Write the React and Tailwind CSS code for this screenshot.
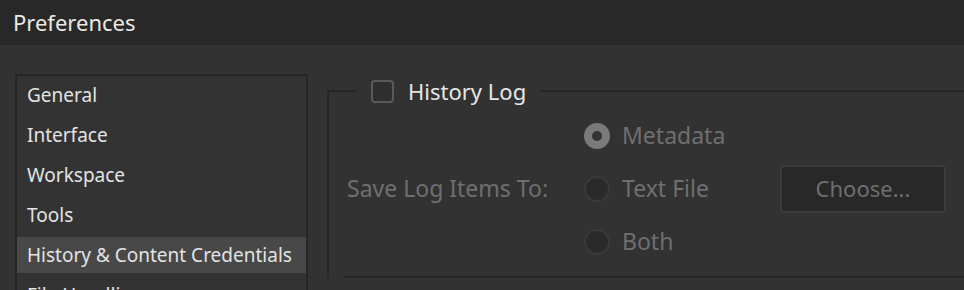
const items = [
  "General",
  "Interface",
  "Workspace",
  "Tools",
  "History & Content Credentials",
  "File Handling",
];

const radios = [
  { label: "Metadata", on: true },
  { label: "Text File", on: false },
  { label: "Both", on: false },
];

function Radio({ on }) {
  if (on) {
    return (
      <span className="flex h-[26px] w-[26px] shrink-0 items-center justify-center rounded-full bg-[#7a7a7a]">
        <span className="h-[10px] w-[10px] rounded-full bg-[#333333]" />
      </span>
    );
  }
  return (
    <span className="h-[26px] w-[26px] shrink-0 rounded-full border-2 border-[#3a3a3a] bg-[#2a2a2a]" />
  );
}

export default function App() {
  return (
    <div
      className="h-[290px] w-[964px] overflow-hidden bg-[#323232] text-[#e3e3e3]"
      style={{ fontFamily: '"Noto Sans", "Open Sans", sans-serif' }}
    >
      {/* TITLE BAR */}
      <div className="flex h-[45px] items-center bg-[#282828] pl-[13px] text-[22px] text-[#ece9e2]">
        Preferences
      </div>

      {/* BODY */}
      <div className="flex items-start pl-[15px] pt-[29px]">
        {/* CATEGORY LIST */}
        <div className="h-[240px] w-[293px] shrink-0 border-2 border-b-0 border-[#262626] bg-[#333333]">
          <ul className="flex flex-col gap-[4px] pt-[1px]">
            {items.map((it) => (
              <li
                key={it}
                className={`flex h-[36px] items-center pl-[10px] text-[19px] ${
                  it.startsWith("History") ? "bg-[#484848]" : ""
                }`}
              >
                {it}
              </li>
            ))}
          </ul>
        </div>

        {/* HISTORY LOG GROUP */}
        <fieldset className="m-0 ml-[19px] mt-[2px] w-[700px] shrink-0 border-0 border-l-2 border-t-2 border-[#262626] p-0 pl-[18px]">
          <legend className="ml-[10px] flex items-center gap-[14px] px-[14px]">
            <span className="h-[23px] w-[23px] rounded-[4px] border-2 border-[#5a5a5a] bg-[#2e2e2e]" />
            <span className="text-[22px] leading-[30px] text-[#e6e6e6]">History Log</span>
          </legend>

          <div className="flex items-center pt-[3px] text-[23px] text-[#6f6f6f]">
            <div className="w-[237px] shrink-0">Save Log Items To:</div>
            <div className="flex w-[196px] shrink-0 flex-col">
              {radios.map((r) => (
                <div key={r.label} className="flex h-[53px] items-center gap-[12px]">
                  <Radio on={r.on} />
                  <span>{r.label}</span>
                </div>
              ))}
            </div>
            <button className="flex h-[48px] w-[166px] items-center justify-center rounded-[4px] border-2 border-[#3b3b3b] bg-[#282828] text-[22px] text-[#6f6f6f]">
              Choose...
            </button>
          </div>

          <div className="mt-[8px] ml-[-3px] border-t-2 border-[#262626]" />
        </fieldset>
      </div>
    </div>
  );
}
